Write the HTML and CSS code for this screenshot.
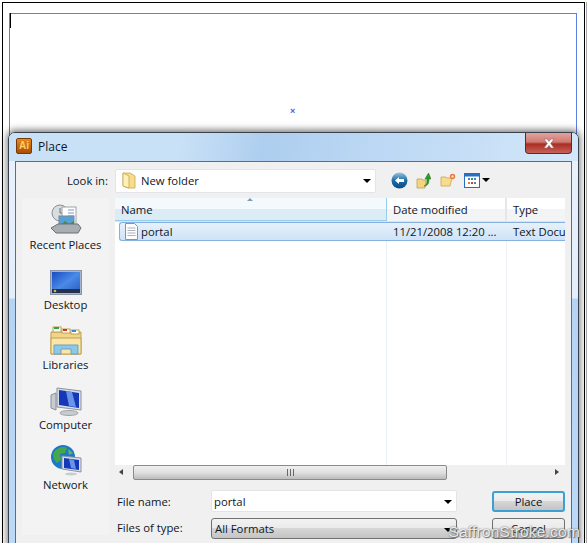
FILE: index.html
```html
<!DOCTYPE html>
<html lang="en">
<head>
  <meta charset="UTF-8">
  <meta name="viewport" content="width=device-width, initial-scale=1.0">
  <title>Place</title>
  <link rel="stylesheet" href="styles.css">
</head>
<body>
  <div class="artboard">
    <div class="page-edge">
      <div class="caret"></div>
      <div class="center-mark">×</div>
    </div>
  </div>

  <div class="dialog">
    <div class="titlebar">
      <div class="ai-icon">Ai</div>
      <div class="title">Place</div>
      <div class="close-btn">
        <svg width="14" height="11" viewBox="0 0 14 11"><path d="M2 1h3l2 2.400L9 1h3L8.700 5.500 12 10H9L7 7.500 5 10H2l3.300-4.500z" fill="#fff" stroke="#8a6a68" stroke-width=".6"/></svg>
      </div>
    </div>

    <div class="panel">
      <div class="lookin-row">
        <span class="lookin-label">Look in:</span>
        <div class="combo lookin-combo">
          <svg class="combo-icon" width="14" height="17" viewBox="0 0 14 17"><path d="M1 1h7l5 3v12H6L1 14z" fill="#f6dc8c" stroke="#c9a54e" stroke-width=".8"/><path d="M1 1l6 3v12l-6-2z" fill="#fdf0b8" stroke="#c9a54e" stroke-width=".8"/></svg>
          <span class="combo-text">New folder</span>
          <span class="arrow"></span>
        </div>
        <div class="tools">
          <svg width="17" height="17" viewBox="0 0 17 17"><defs><linearGradient id="backg" x1="0" y1="0" x2="0" y2="1"><stop offset="0" stop-color="#9cc4dc"/><stop offset=".5" stop-color="#1c6ea8"/><stop offset="1" stop-color="#0a4a88"/></linearGradient></defs><circle cx="8.500" cy="8.500" r="8" fill="url(#backg)"/><path d="M4 8.500l4-3.500v2h5v3H8v2z" fill="#fff"/></svg>
          <svg class="tool-up" width="15" height="17" viewBox="0 0 15 17"><path d="M1 7h5l1 1h3l-1 8H1z" fill="#f3d581" stroke="#c4a04a" stroke-width=".8"/><path d="M8 14c3-1 3-4 3-7H9l3.500-6L15 7h-2c0 4-1 7-5 7z" fill="#2f9a2c" stroke="#1c701c" stroke-width=".5"/></svg>
          <svg class="tool-new" width="16" height="14" viewBox="0 0 16 14"><path d="M1 4h5l1 1h5l-2 8H1z" fill="#f6dc8c" stroke="#c9a54e" stroke-width=".8"/><circle cx="12.500" cy="3.500" r="2.700" fill="#f0763a"/><circle cx="12.500" cy="3.500" r="1.200" fill="#fde0a0"/></svg>
          <svg class="tool-view" width="16" height="15" viewBox="0 0 16 15"><rect x=".5" y=".5" width="15" height="14" fill="#fff" stroke="#2a6cc0"/><rect x="1" y="1" width="14" height="2.500" fill="#2a6cc0"/><rect x="4" y="5" width="2" height="2" fill="#4a7fc0"/><rect x="7" y="5" width="2" height="2" fill="#2f9a4c"/><rect x="10" y="5" width="2" height="2" fill="#4a7fc0"/><rect x="4" y="9" width="2" height="2" fill="#e08030"/><rect x="7" y="9" width="2" height="2" fill="#d04040"/><rect x="10" y="9" width="2" height="2" fill="#4a7fc0"/></svg>
          <span class="arrow view-arrow"></span>
        </div>
      </div>

      <div class="main-row">
        <div class="places">
          <div class="place">
            <svg width="36" height="32" viewBox="0 0 36 32"><circle cx="12" cy="9" r="8" fill="#d8dde0" stroke="#8a9298"/><path d="M12 4v5h4" fill="none" stroke="#6a7278"/><rect x="14" y="3" width="14" height="18" fill="#fff" stroke="#9aa4aa"/><path d="M20 6h6M20 9h6M20 12h6" stroke="#7a9ac0"/><rect x="11" y="12" width="15" height="11" fill="#5aa0d8" stroke="#7a8a94"/><path d="M11 23l6-6 4 3 5-3v6z" fill="#4a8a4a"/><path d="M3 24l7-4h20l3 4-3 5H8z" fill="#a8aeb2" stroke="#6a7076"/></svg>
            <span>Recent Places</span>
          </div>
          <div class="place">
            <svg width="32" height="26" viewBox="0 0 32 26"><defs><linearGradient id="deskg" x1="0" y1="0" x2="1" y2="1"><stop offset="0" stop-color="#1a4cc0"/><stop offset=".5" stop-color="#4a8ae8"/><stop offset="1" stop-color="#2a5cc0"/></linearGradient></defs><rect x=".5" y=".5" width="31" height="24" fill="#a8b4c8" stroke="#8a94a8"/><rect x="2" y="2" width="28" height="21" fill="url(#deskg)"/><rect x="2" y="19" width="28" height="4" fill="#24304c"/><circle cx="5" cy="21" r="1.300" fill="#e0b040"/></svg>
            <span>Desktop</span>
          </div>
          <div class="place">
            <svg width="32" height="30" viewBox="0 0 32 30"><path d="M1 6h30v22H1z" fill="#f0d488" stroke="#bfa050"/><rect x="3" y="1" width="8" height="5" fill="#fff" stroke="#bfa050"/><rect x="4" y="1" width="5" height="2" fill="#28a848"/><rect x="12" y="3" width="8" height="4" fill="#fff" stroke="#bfa050"/><rect x="13" y="3" width="4" height="2" fill="#c83828"/><rect x="21" y="4" width="8" height="4" fill="#fff" stroke="#bfa050"/><rect x="22" y="4" width="4" height="2" fill="#3888d8"/><path d="M1 12h30v16H1z" fill="#fbe6a8" stroke="#bfa050"/><path d="M4 28V19h24v9h-7v-5H11v5z" fill="#8cc8e8" stroke="#6aa0c8"/></svg>
            <span>Libraries</span>
          </div>
          <div class="place">
            <svg width="32" height="30" viewBox="0 0 32 30"><path d="M1 9l5-2v17l-5-2z" fill="#c8ccd0" stroke="#8a9096"/><path d="M7 2l24 3v19L7 21z" fill="#d8dce4" stroke="#8a94a0"/><path d="M9 4l20 3v15L9 19z" fill="#1438b8"/><path d="M16 5l6 1 4 15-7-1z" fill="#6a94e8"/><ellipse cx="19" cy="27" rx="9" ry="2.500" fill="#c8ccd0" stroke="#a0a4a8"/></svg>
            <span>Computer</span>
          </div>
          <div class="place">
            <svg width="32" height="32" viewBox="0 0 32 32"><circle cx="13" cy="13" r="12" fill="#1e78c8"/><path d="M4 8c4-5 10-6 13-4l-2 5-5 1 1 6-4 3C4 16 2 12 4 8z" fill="#44a848"/><path d="M18 5l5 4-4 2z" fill="#64b850"/><path d="M12 12l19 2v14l-19-3z" fill="#d8dce4" stroke="#8a94a0"/><path d="M14 14l15 2v10l-15-2z" fill="#1438b8"/><path d="M19 15l5 1 2 9-5-1z" fill="#6a94e8"/><ellipse cx="21" cy="30" rx="6" ry="1.500" fill="#c8ccd0"/></svg>
            <span>Network</span>
          </div>
        </div>

        <div class="browser">
          <div class="filelist">
            <div class="list-head">
              <div class="col col-name head-cell sorted">Name<span class="sort-arrow"></span></div>
              <div class="col col-date head-cell">Date modified</div>
              <div class="col col-type head-cell">Type</div>
            </div>
            <div class="list-row">
              <div class="col col-name">
                <svg width="13" height="17" viewBox="0 0 13 17"><path d="M.5 .5h9l3 3v13H.5z" fill="#fdfdfd" stroke="#8a949c"/><path d="M2.500 5h8M2.500 7.500h8M2.500 10h8M2.500 12.500h8" stroke="#aab2ba"/></svg>
                portal
              </div>
              <div class="col col-date">11/21/2008 12:20 ...</div>
              <div class="col col-type">Text Docu</div>
            </div>
            <div class="list-rest">
              <div class="col col-name"></div>
              <div class="col col-date"></div>
              <div class="col col-type"></div>
            </div>
          </div>

          <div class="hscroll">
            <span class="scroll-arrow left"></span>
            <div class="thumb"><span class="grip"></span></div>
            <span class="scroll-arrow right"></span>
          </div>

          <div class="form">
            <div class="form-row">
              <label class="form-label">File name:</label>
              <div class="combo name-combo">
                <span class="combo-text">portal</span>
                <span class="arrow"></span>
              </div>
              <button class="btn btn-default">Place</button>
            </div>
            <div class="form-row row-type">
              <label class="form-label">Files of type:</label>
              <div class="combo type-combo">
                <span class="combo-text">All Formats</span>
                <span class="arrow"></span>
              </div>
              <button class="btn btn-cancel">Cancel</button>
            </div>
          </div>
        </div>
      </div>
    </div>
  </div>

  <div class="watermark">SaffronStroke.com</div>
</body>
</html>
```

FILE: styles.css
```css
html, body { margin:0; padding:0; }
body {
  width:588px; height:543px;
  overflow:hidden; position:relative;
  background:#fff;
  font-family:"Open Sans", "Noto Sans", sans-serif;
  font-size:11.300px; color:#0e1526;
}
svg { display:block; flex:none; }

/* artboard behind the dialog */
.artboard {
  box-sizing:border-box;
  width:583px; height:560px;
  margin:2px 0 0 2px;
  padding:10px 7px 0 6px;
  border:1px solid #000;
  border-bottom:none;
  box-shadow:1px 0 0 #fff, 2px 0 0 #aaa;
}
.page-edge {
  box-sizing:border-box;
  position:relative;
  height:540px;
  border:1px solid #5f7fe0;
  border-bottom:none;
}
.caret {
  position:absolute; left:0; top:-1px;
  width:1px; height:15px; background:#000;
}
.center-mark {
  position:absolute; left:280px; top:93px;
  color:#3f66e0; font:bold 9px/9px "Liberation Sans", sans-serif;
}

/* dialog */
.dialog {
  box-sizing:border-box;
  position:absolute; left:8px; top:132px;
  width:571px; height:420px;
  padding:0 6px;
  border:1px solid #39424c;
  border-radius:7px 7px 0 0;
  background:linear-gradient(180deg, #e8f1fb 0, #e4eefb 165px, #b4d4f6 166px, #bcd9f8 420px);
  box-shadow:0 -1px 7px 1px rgba(0,0,0,.55);
}
.titlebar {
  box-sizing:border-box;
  display:flex; align-items:flex-start;
  height:28px;
  background:linear-gradient(100deg, #c9e1f6 0, #c9e1f6 30%, #aeceef 45%, #bcd8f4 65%, #d3e7f9 100%);
  margin:0 -6px; padding:5px 6px 0 7px;
  border-radius:6px 6px 0 0;
}
.ai-icon {
  box-sizing:border-box;
  width:16px; height:16px;
  background:linear-gradient(180deg, #e98a1c, #a84c04);
  border:1px solid #7a3a08;
  border-radius:2px;
  color:#ffd06a;
  font:bold 10px/14px "Liberation Sans", sans-serif;
  text-align:center;
}
.title { margin-left:6px; font-size:12px; line-height:17px; color:#10161e; }
.close-btn {
  box-sizing:border-box;
  margin:-5px 0 0 auto;
  width:47px; height:21px;
  display:flex; align-items:center; justify-content:center;
  background:linear-gradient(180deg, #e3a29c 0, #cf7b74 45%, #a92e22 55%, #c8605a 100%);
  border:1px solid #50302e;
  border-top:none;
  border-radius:0 0 4px 4px;
}

.panel {
  box-sizing:border-box;
  height:391px;
  padding:7px 6px 0 6px;
  background:#f0f0f0;
  border:1px solid #5d6d7d;
  border-bottom:none;
}
.lookin-row { display:flex; align-items:center; height:24px; }
.lookin-label { width:86px; text-align:right; margin:-2px 7px 0 0; }
.combo {
  box-sizing:border-box;
  display:flex; align-items:center;
  background:#fff;
  border:1px solid #e2e4e8;
  border-radius:2px;
  position:relative;
}
.lookin-combo { width:261px; height:24px; padding:0 0 2px 6px; }
.combo-icon { margin-right:5px; }
.arrow {
  width:0; height:0;
  border:4px solid transparent;
  border-top:4px solid #000;
  border-bottom:none;
  position:absolute; right:4px; top:9px;
}
.tools { display:flex; align-items:center; margin:-2px 0 0 15px; }
.tool-up { margin-left:8px; }
.tool-new { margin-left:9px; }
.tool-view { margin-left:8px; }
.tools .view-arrow { position:static; margin-left:2px; }

.main-row { display:flex; margin-top:5px; }
.places {
  box-sizing:border-box;
  width:87px; height:337px;
  background:#f3f3f3;
  display:flex; flex-direction:column;
}
.place {
  height:60px;
  display:flex; flex-direction:column; align-items:center; justify-content:flex-end;
  gap:1px;
  line-height:16px;
  white-space:nowrap;
}
.place:first-child { height:55px; }
.browser { width:450px; margin-left:6px; }

.filelist {
  display:flex; flex-direction:column;
  height:267px;
  background:#fff;
  overflow:hidden;
}
.list-head {
  display:flex; height:23px; flex:none;
  background:linear-gradient(180deg, #fff 0, #fff 48%, #f3f4f6 50%, #f3f4f6 100%);
  border-bottom:1px solid #e0e4e8;
}
.col { box-sizing:border-box; flex:none; height:100%; white-space:nowrap; overflow:hidden; }
.col-name { width:272px; }
.col-date { width:120px; }
.col-type { width:58px; }
.head-cell {
  padding:3px 0 0 6px;
  border-right:2px solid #e4e7ea;
  line-height:18px;
  position:relative;
}
.col-type.head-cell { border-right:none; }
.sorted {
  background:linear-gradient(180deg, #f3f9fc 0, #f3f9fc 48%, #dcecf5 50%, #dcecf5 100%);
  border-right:1px solid #95cdf0;
  box-shadow:inset 0 -1px 0 #95cdf0;
}
.sort-arrow {
  position:absolute; left:132px; top:0;
  width:0; height:0;
  border:3.500px solid transparent;
  border-bottom:3.500px solid #7a9cb8;
  border-top:none;
}
.list-row {
  box-sizing:border-box;
  display:flex; align-items:center;
  flex:none;
  height:19px;
  margin:0 0 0 4px;
  border:1px solid #85b0e0;
  border-right:none;
  border-radius:3px 0 0 3px;
  background:linear-gradient(180deg, #e6f1fb 0, #cfe3f7 100%);
}
.list-row .col { display:flex; align-items:center; padding-bottom:1px; }
.list-row .col-name { width:267px; padding-left:5px; gap:3px; }
.list-row .col-date { padding-left:6px; }
.list-row .col-type { padding-left:6px; }
.list-rest { display:flex; flex:1; }
.list-rest .col-name { border-right:1px solid #e6f0f8; }
.list-rest .col-date { border-right:1px solid #eef1f5; }

.hscroll {
  display:flex; align-items:center;
  height:15px;
  background:#f0f0f0;
  position:relative;
}
.scroll-arrow {
  width:0; height:0; position:absolute; top:4px;
  border:3.500px solid transparent;
}
.scroll-arrow.left { left:4px; border-left:none; border-right:4px solid #444; }
.scroll-arrow.right { right:6px; border-right:none; border-left:4px solid #444; }
.thumb {
  box-sizing:border-box;
  margin-left:18px;
  width:314px; height:15px;
  background:linear-gradient(180deg, #f0f0f0 0, #e0e0e0 50%, #bcbcbc 100%);
  border:1px solid #8a8a8a;
  border-radius:2px;
  display:flex; align-items:center; justify-content:center;
}
.grip {
  width:7px; height:7px;
  background:repeating-linear-gradient(90deg, #666 0, #666 1px, transparent 1px, transparent 3px);
}

.form { margin-top:10px; display:flex; flex-direction:column; gap:6px; }
.form-row { display:flex; align-items:center; height:22px; }
.form-row.row-type { height:21px; align-items:flex-start; line-height:20px; }
.form-label { width:96px; padding-left:2px; flex:none; box-sizing:border-box; }
.name-combo, .type-combo { width:246px; height:22px; padding-left:2px; }
.type-combo {
  height:21px;
  padding-left:3px;
  border:1px solid #707070;
  border-radius:3px;
  background:linear-gradient(180deg, #f2f2f2 0, #ebebeb 45%, #d6d6d6 50%, #c4c4c4 100%);
}
.btn {
  box-sizing:border-box;
  margin-left:35px;
  width:73px; height:21px;
  padding:0;
  font:inherit; color:#0e1526;
  border:1px solid #707070;
  border-radius:3px;
  background:linear-gradient(180deg, #f2f2f2 0, #ebebeb 45%, #d6d6d6 50%, #c4c4c4 100%);
}
.btn-default { border:2px solid #3ca0d4; }

.watermark {
  position:absolute; right:8px; top:521px;
  font:15.500px/22px "Liberation Sans", sans-serif;
  letter-spacing:.2px;
  color:rgba(255,255,255,.85);
  text-shadow:0 0 2px #555, 1px 1px 1px #777;
}
```
